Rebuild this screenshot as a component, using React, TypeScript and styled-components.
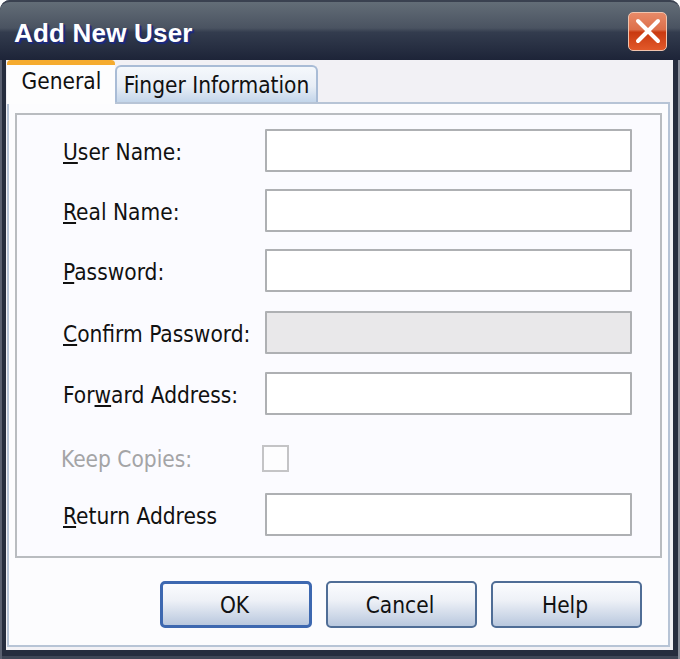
import React from 'react';
import styled, { createGlobalStyle } from 'styled-components';

const GlobalStyle = createGlobalStyle`
  html, body {
    margin: 0;
    padding: 0;
    background: #fff;
  }
`;

const fields = [
  { before: '', key: 'U', after: 'ser Name:', gap: 0 },
  { before: '', key: 'R', after: 'eal Name:', gap: 17 },
  { before: '', key: 'P', after: 'assword:', gap: 17 },
  { before: '', key: 'C', after: 'onfirm Password:', gap: 19, disabled: true },
  { before: 'For', key: 'w', after: 'ard Address:', gap: 18 },
];

const App: React.FC = () => {
  return (
    <Window>
      <GlobalStyle />
      <TitleBar>
        <Title>Add New User</Title>
        <CloseButton aria-label="Close">
          <svg width="26" height="26" viewBox="0 0 26 26">
            <path d="M3 3 L23 23 M23 3 L3 23" stroke="#fff" strokeWidth="4" strokeLinecap="round" />
          </svg>
        </CloseButton>
      </TitleBar>
      <Body>
        <Tabs>
          <ActiveTab>General</ActiveTab>
          <Tab>Finger Information</Tab>
        </Tabs>
        <TabPage>
          <Panel>
            <Form>
              {fields.map((f) => (
                <Row key={f.key} $gap={f.gap}>
                  <Label>
                    {f.before}
                    <u>{f.key}</u>
                    {f.after}
                  </Label>
                  <Input $disabled={f.disabled} />
                </Row>
              ))}
              <CheckRow>
                <DisabledLabel>Keep Copies:</DisabledLabel>
                <CheckBox />
              </CheckRow>
              <Row $gap={21}>
                <Label>
                  <u>R</u>eturn Address
                </Label>
                <Input />
              </Row>
            </Form>
          </Panel>
          <Buttons>
            <Button $primary>OK</Button>
            <Button>Cancel</Button>
            <Button>Help</Button>
          </Buttons>
        </TabPage>
      </Body>
    </Window>
  );
};

export default App;

const Window = styled.div`
  width: 680px;
  height: 659px;
  box-sizing: border-box;
  display: flex;
  flex-direction: column;
  background: #262d3e;
  box-shadow: inset 2px 0 #5a6070, inset -2px 0 #8a8f9a, inset 0 -3px #3f4656;
  border-radius: 10px 10px 0 0;
  padding: 0 7px 9px 6px;
  overflow: hidden;
  font-family: "DejaVu Sans", sans-serif;
  font-stretch: condensed;
  font-size: 22.5px;
  color: #111;
`;

const TitleBar = styled.div`
  height: 60px;
  flex: none;
  margin: 0 -7px 0 -6px;
  padding: 0 14px;
  display: flex;
  align-items: center;
  justify-content: space-between;
  border-top: 2px solid #3a4150;
  box-sizing: border-box;
  border-radius: 10px 10px 0 0;
  background: linear-gradient(to bottom, #636d77 0%, #4a5361 45%, #333c4e 52%, #1d2438 100%);
`;

const Title = styled.div`
  color: #fff;
  font-family: "Liberation Sans", Arial, sans-serif;
  font-size: 26px;
  font-weight: 700;
  letter-spacing: 0.2px;
  margin-top: 4px;
  text-shadow: 1px 1px 1px #1b2a80, 2px 2px 1px #1b2a80;
`;

const CloseButton = styled.div`
  width: 39px;
  height: 39px;
  margin-right: -1px;
  box-sizing: border-box;
  display: flex;
  align-items: center;
  justify-content: center;
  border: 1px solid #f0c4ae;
  border-radius: 5px;
  background: linear-gradient(to bottom, #e88a68 0%, #dd6f4a 45%, #c93a10 52%, #e2592a 100%);
`;

const Body = styled.div`
  flex: 1;
  min-height: 0;
  display: flex;
  flex-direction: column;
  background: #f2f1f5;
  padding: 0 3px 3px 1px;
`;

const Tabs = styled.div`
  height: 42px;
  flex: none;
  display: flex;
  align-items: flex-end;
`;

const ActiveTab = styled.div`
  position: relative;
  z-index: 1;
  width: 108px;
  height: 44px;
  margin-bottom: -2px;
  box-sizing: border-box;
  background: #fdfdfe;
  border-top: 5px solid #f5ab2f;
  border-radius: 4px 4px 0 0;
  padding-left: 1px;
  line-height: 33px;
  text-align: center;
`;

const Tab = styled.div`
  width: 203px;
  height: 37px;
  box-sizing: border-box;
  border: 2px solid #a9bcd6;
  border-bottom: 0;
  border-radius: 6px 6px 0 0;
  background: linear-gradient(to bottom, #f5f8fc 0%, #e8eef6 55%, #c3d5ea 100%);
  line-height: 36px;
  text-align: center;
  white-space: nowrap;
`;

const TabPage = styled.div`
  flex: 1;
  min-height: 0;
  display: flex;
  flex-direction: column;
  border: 2px solid #b7c4d6;
  background: #fcfcfe;
`;

const Panel = styled.div`
  height: 445px;
  flex: none;
  box-sizing: border-box;
  margin: 9px 6px 0 6px;
  border: 2px solid #b9bcc0;
  background: #fbfbff;
`;

const Form = styled.div`
  display: flex;
  flex-direction: column;
  padding: 14px 28px 0 46px;
`;

const Row = styled.div<{ $gap: number }>`
  display: grid;
  grid-template-columns: 202px 1fr;
  align-items: center;
  height: 43px;
  margin-top: ${(p) => p.$gap}px;
`;

const Label = styled.div`
  white-space: nowrap;
  padding-top: 2px;
`;

const Input = styled.div<{ $disabled?: boolean }>`
  height: 43px;
  box-sizing: border-box;
  border: 2px solid #aeb0b3;
  border-radius: 1px;
  background: ${(p) => (p.$disabled ? '#e9e8ea' : '#fff')};
`;

const CheckRow = styled.div`
  display: grid;
  grid-template-columns: 201px 27px;
  align-items: center;
  height: 27px;
  margin: 30px 0 0 -2px;
`;

const DisabledLabel = styled.div`
  color: #a4a4a6;
  white-space: nowrap;
  padding-top: 1px;
`;

const CheckBox = styled.div`
  height: 27px;
  box-sizing: border-box;
  border: 2px solid #c4c4c6;
  background: #fdfdfe;
`;

const Buttons = styled.div`
  flex: 1;
  display: flex;
  justify-content: flex-end;
  align-items: flex-start;
  gap: 14px;
  padding: 23px 26px 0 0;
`;

const Button = styled.div<{ $primary?: boolean }>`
  width: ${(p) => (p.$primary ? 152 : 151)}px;
  height: 47px;
  box-sizing: border-box;
  display: flex;
  align-items: center;
  justify-content: center;
  padding: 1px 3px 0 0;
  border: ${(p) => (p.$primary ? '3px solid #3d68b0' : '2px solid #4f6d96')};
  border-radius: 5px;
  background: linear-gradient(to bottom, #fbfcfe 0%, #eef1f7 40%, #b9c8de 100%);
`;
